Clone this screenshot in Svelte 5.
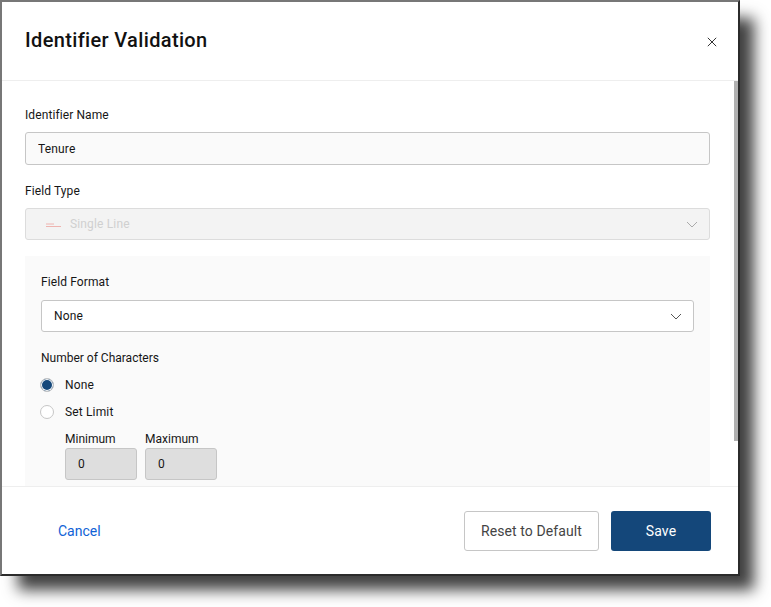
<script>
    const limits = [
        { label: 'Minimum', value: '0' },
        { label: 'Maximum', value: '0' }
    ];
</script>

<div class="page">
    <div class="dialog">
        <header class="header">
            <h1>Identifier Validation</h1>
            <svg class="close" width="10" height="10" viewBox="0 0 10 10" aria-label="Close">
                <path d="M0.8 0.8 9.2 9.2M9.2 0.8 0.8 9.2" stroke="#333" stroke-width="1" fill="none" />
            </svg>
        </header>

        <div class="body">
            <div class="thumb"></div>

            <label class="label" for="name">Identifier Name</label>
            <input id="name" class="control" value="Tenure" />

            <div class="label type-label">Field Type</div>
            <div class="control select disabled">
                <svg class="line-icon" width="15" height="5" viewBox="0 0 15 5">
                    <path d="M0 1H8" stroke="#eeb4b0" stroke-width="1" />
                    <path d="M0 3.5H15" stroke="#eeb4b0" stroke-width="1" />
                </svg>
                <span>Single Line</span>
                <svg class="chevron" width="12" height="7" viewBox="0 0 12 7">
                    <path d="M1 1 6 6 11 1" stroke="#aaa" stroke-width="1" fill="none" />
                </svg>
            </div>

            <section class="panel">
                <div class="label">Field Format</div>
                <div class="control select format">
                    <span>None</span>
                    <svg class="chevron" width="12" height="7" viewBox="0 0 12 7">
                        <path d="M1 1 6 6 11 1" stroke="#555" stroke-width="1" fill="none" />
                    </svg>
                </div>

                <div class="label chars">Number of Characters</div>
                <div class="radio-row">
                    <span class="radio checked"></span>
                    <span>None</span>
                </div>
                <div class="radio-row">
                    <span class="radio"></span>
                    <span>Set Limit</span>
                </div>

                <div class="limits">
                    {#each limits as limit}
                        <div class="limit">
                            <div class="limit-label">{limit.label}</div>
                            <div class="limit-box">{limit.value}</div>
                        </div>
                    {/each}
                </div>
            </section>
        </div>

        <footer class="footer">
            <button class="cancel">Cancel</button>
            <div class="actions">
                <button class="reset">Reset to Default</button>
                <button class="save">Save</button>
            </div>
        </footer>
    </div>
</div>

<style>
    :global(body) {
        background: #fff;
    }
    .page {
        width: 771px;
        height: 607px;
        overflow: hidden;
        font-family: Roboto, "Noto Sans", sans-serif;
        font-size: 12px;
        color: #161616;
    }
    .dialog {
        box-sizing: border-box;
        width: 740px;
        height: 576px;
        display: flex;
        flex-direction: column;
        background: #fff;
        border: 2px solid;
        border-color: #777 #2b2b2b #2b2b2b #777;
        box-shadow: 16px 16px 14px -2px rgba(0, 0, 0, 0.75);
    }
    .header {
        flex: none;
        height: 79px;
        box-sizing: border-box;
        display: flex;
        align-items: center;
        justify-content: space-between;
        padding: 0 21px 0 23px;
        border-bottom: 1px solid #eee;
    }
    h1 {
        margin: 0 0 3px;
        font-size: 20px;
        font-weight: 500;
        letter-spacing: 0.35px;
        color: #111;
    }
    .close {
        margin-top: 1px;
    }
    .body {
        position: relative;
        flex: 1;
        min-height: 0;
        overflow: hidden;
        padding: 27px 28px 0 23px;
    }
    .thumb {
        position: absolute;
        top: 0;
        right: 0;
        width: 4px;
        height: 360px;
        background: #b0b0b0;
    }
    .label {
        display: block;
        height: 14px;
        line-height: 14px;
        letter-spacing: 0.1px;
    }
    .type-label {
        margin-top: 19px;
    }
    .control {
        box-sizing: border-box;
        display: block;
        width: 100%;
        height: 33px;
        margin-top: 10px;
        padding: 0 12px;
        border: 1px solid #c6c6c6;
        border-radius: 3px;
        background: #fafafa;
        font: inherit;
        letter-spacing: 0.15px;
        color: #161616;
    }
    .select {
        display: flex;
        align-items: center;
        height: 32px;
    }
    .chevron {
        margin: 0 -1px 0 auto;
    }
    .disabled {
        background: #f3f3f3;
        border-color: #dcdcdc;
        color: #d0d0d0;
    }
    .line-icon {
        margin: 2px 10px 0 8px;
    }
    .disabled span {
        margin-left: -1px;
    }
    .panel {
        margin-top: 16px;
        height: 240px;
        box-sizing: border-box;
        padding: 19px 16px 0;
        background: #fafafa;
    }
    .format {
        background: #fff;
        margin-top: 11px;
    }
    .chars {
        margin-top: 19px;
        letter-spacing: 0;
    }
    .radio-row {
        display: flex;
        align-items: center;
        gap: 11px;
        height: 14px;
        margin: 13px 0 0 -1px;
        letter-spacing: 0.15px;
    }
    .radio {
        box-sizing: border-box;
        width: 14px;
        height: 14px;
        border: 1px solid #c6c6c6;
        border-radius: 50%;
        background: #fff;
    }
    .radio.checked {
        background: #14477a;
        box-shadow: inset 0 0 0 1px #fff;
    }
    .limits {
        display: flex;
        gap: 8px;
        margin: 13px 0 0 24px;
    }
    .limit {
        width: 72px;
    }
    .limit-label {
        height: 14px;
        line-height: 14px;
    }
    .limit-box {
        box-sizing: border-box;
        height: 32px;
        margin-top: 2px;
        padding: 0 12px;
        line-height: 30px;
        border: 1px solid #c6c6c6;
        border-radius: 3px;
        background: #dedede;
    }
    .footer {
        flex: none;
        height: 88px;
        box-sizing: border-box;
        display: flex;
        align-items: center;
        justify-content: space-between;
        padding: 0 27px 0 38px;
        border-top: 1px solid #eee;
    }
    button {
        font: inherit;
        font-size: 14px;
        letter-spacing: 0.1px;
        cursor: pointer;
    }
    .cancel {
        padding: 0 18px;
        border: none;
        background: none;
        letter-spacing: 0;
        color: #0f62d6;
    }
    .actions {
        display: flex;
        gap: 12px;
    }
    .reset,
    .save {
        height: 40px;
        border-radius: 3px;
    }
    .reset {
        width: 135px;
        border: 1px solid #c6c6c6;
        background: #fff;
        color: #444;
    }
    .save {
        width: 100px;
        border: none;
        background: #14477a;
        color: #fff;
    }
</style>
